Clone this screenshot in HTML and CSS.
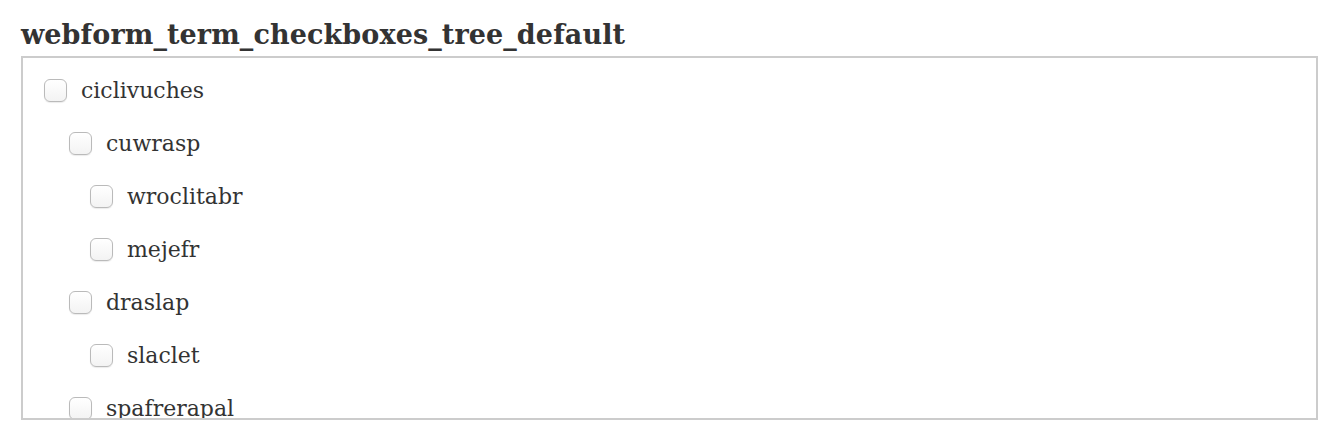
FILE: index.html
```html
<!DOCTYPE html>
<html>
<head>
<meta charset="utf-8">
<link rel="stylesheet" href="styles.css">
</head>
<body>
<div class="field">
  <div class="label">webform_term_checkboxes_tree_default</div>
  <div class="tree">
    <div class="item lvl0"><span class="cb"></span><span class="txt">ciclivuches</span></div>
    <div class="item lvl1"><span class="cb"></span><span class="txt">cuwrasp</span></div>
    <div class="item lvl2"><span class="cb"></span><span class="txt">wroclitabr</span></div>
    <div class="item lvl2"><span class="cb"></span><span class="txt">mejefr</span></div>
    <div class="item lvl1"><span class="cb"></span><span class="txt">draslap</span></div>
    <div class="item lvl2"><span class="cb"></span><span class="txt">slaclet</span></div>
    <div class="item lvl1"><span class="cb"></span><span class="txt">spafrerapal</span></div>
  </div>
</div>
</body>
</html>
```
FILE: styles.css
```css
html, body {
  margin: 0;
  padding: 0;
  background: #fff;
}
body {
  font-family: "DejaVu Serif", "Liberation Serif", serif;
  color: #333;
}
.field {
  padding: 16px 22px 0 21px;
}
.label {
  font-weight: bold;
  font-size: 27px;
  line-height: 38px;
  height: 40px;
  color: #333;
  letter-spacing: 0.1px;
}
.tree {
  width: 1293px;
  height: 354px;
  border: 2px solid #cccccc;
  overflow: hidden;
  padding-top: 6px;
  box-sizing: content-box;
}
.item {
  display: flex;
  align-items: center;
  height: 53px;
  font-size: 22px;
}
.lvl0 { padding-left: 21px; }
.lvl1 { padding-left: 46px; }
.lvl2 { padding-left: 67px; }
.cb {
  width: 21px;
  height: 21px;
  border: 1px solid #bababa;
  border-radius: 6px;
  background: linear-gradient(#ffffff, #f3f3f3);
  box-shadow: 0 1px 1px rgba(0,0,0,0.08);
  flex: none;
}
.txt {
  margin-left: 14px;
  color: #333;
}
```
